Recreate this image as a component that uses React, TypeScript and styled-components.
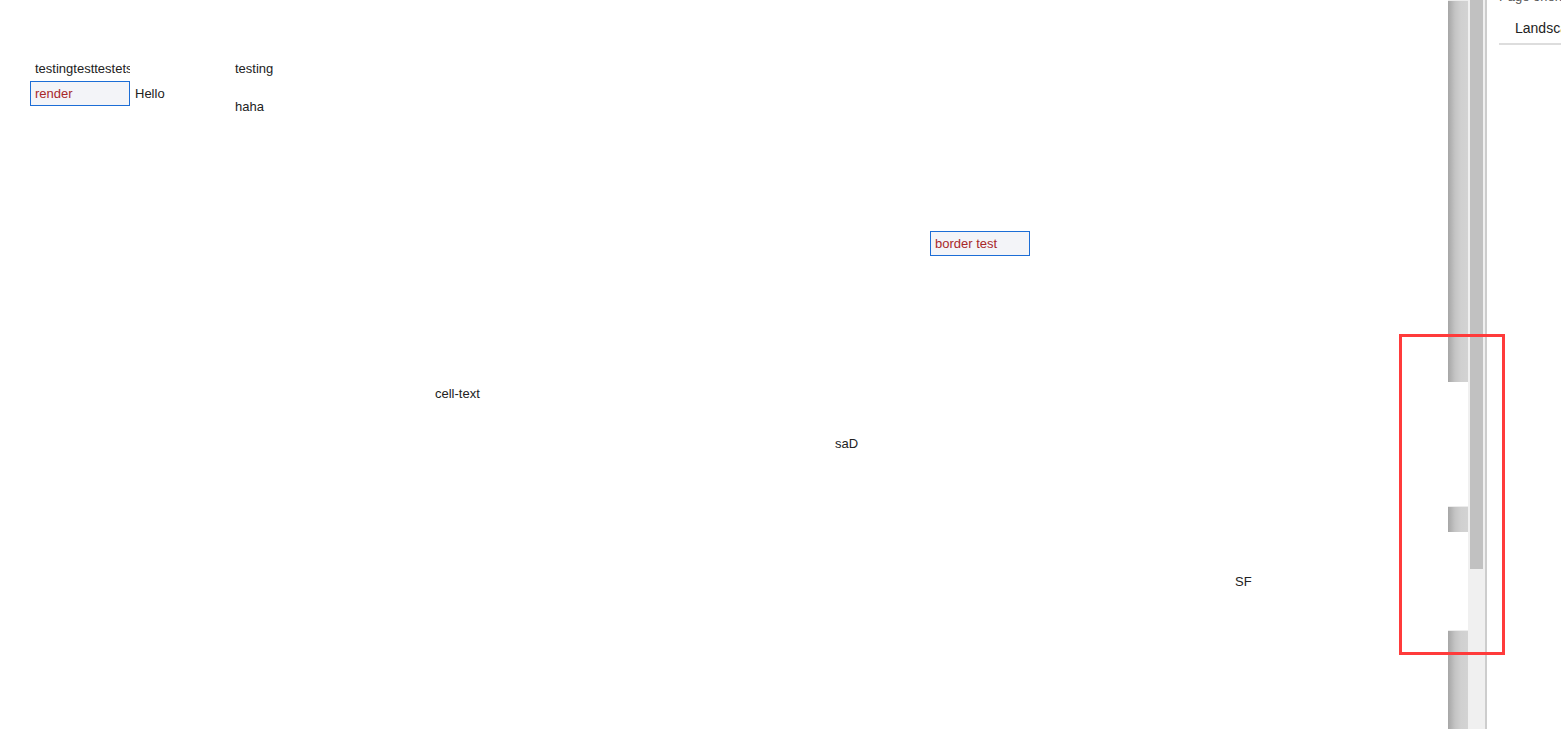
import { FunctionComponent as FC } from 'react';
import styled, { createGlobalStyle } from 'styled-components';

interface ICell {
  col: number;
  row: number;
  span?: number;
  text: string;
  boxed?: boolean;
}

const cells: ICell[] = [
  { col: 1, row: 1, text: 'testingtesttestetstesting' },
  { col: 1, row: 2, text: 'render', boxed: true },
  { col: 2, row: 2, text: 'Hello' },
  { col: 3, row: 1, text: 'testing' },
  { col: 3, row: 2, span: 2, text: 'haha' },
  { col: 10, row: 8, text: 'border test', boxed: true },
  { col: 5, row: 14, text: 'cell-text' },
  { col: 9, row: 16, text: 'saD' },
  { col: 13, row: 21, span: 2, text: 'SF' },
];

// gray header blocks in the frozen strip: [top, height]
const stripBlocks: [number, number][] = [
  [0, 382],
  [506, 26],
  [630, 99],
];

const GlobalStyle = createGlobalStyle`
  html, body {
    margin: 0;
    padding: 0;
    height: 100%;
    overflow: hidden;
    background: #ffffff;
    font-family: 'Liberation Sans', Arial, sans-serif;
    font-size: 13px;
    color: #222222;
  }
`;

const Page = styled.div`
  position: relative;
  display: flex;
  width: 1561px;
  height: 729px;
  overflow: hidden;
`;

const Sheet = styled.div`
  flex: 0 0 1448px;
  height: 100%;
  padding: 56px 0 0 30px;
  box-sizing: border-box;
  overflow: hidden;
`;

const Grid = styled.div`
  display: grid;
  grid-template-columns: repeat(14, 100px);
  grid-auto-rows: 25px;
`;

const Cell = styled.div<{ $col: number; $row: number; $span: number; $boxed?: boolean }>`
  grid-column: ${p => p.$col};
  grid-row: ${p => p.$row} / span ${p => p.$span};
  display: flex;
  align-items: center;
  box-sizing: border-box;
  overflow: hidden;
  white-space: nowrap;
  color: ${p => (p.$boxed ? '#a8282a' : '#222222')};
  background: ${p => (p.$boxed ? '#f3f4f8' : 'transparent')};
  border: ${p => (p.$boxed ? '1px solid #1c6dd6' : 'none')};
  padding: 0 5px 0 ${p => (p.$boxed ? '4px' : '5px')};
`;

const Strip = styled.div`
  position: relative;
  flex: 0 0 20px;
  height: 100%;
  background: #ffffff;
`;

const StripBlock = styled.div`
  position: absolute;
  left: 0;
  width: 20px;
  box-sizing: border-box;
  border-top: 1px solid #ececec;
  background: linear-gradient(to right, #a6a6a6 0%, #c4c4c4 35%, #d0d0d0 65%, #d3d3d3 100%);
`;

const Track = styled.div`
  flex: 0 0 17px;
  height: 100%;
  background: #f0f0f0;
  padding: 0 2px;
  box-sizing: border-box;
`;

const Thumb = styled.div`
  width: 13px;
  height: 569px;
  background: #c1c1c1;
`;

const Divider = styled.div`
  flex: 0 0 2px;
  height: 100%;
  background: #cdcdcd;
`;

const Panel = styled.div`
  flex: 1;
  height: 100%;
  padding: 0 0 0 12px;
  overflow: hidden;
  white-space: nowrap;
`;

const PanelLabel = styled.div`
  margin-top: -11px;
  height: 16px;
  line-height: 16px;
  color: #555555;
`;

const PanelSelect = styled.div`
  height: 30px;
  line-height: 30px;
  padding-left: 16px;
  margin-top: 8px;
  border-bottom: 2px solid #dddddd;
  font-size: 14px;
  color: #222222;
`;

const Annotation = styled.div`
  position: absolute;
  left: 1399px;
  top: 334px;
  width: 106px;
  height: 321px;
  box-sizing: border-box;
  border: 3px solid #ff3b3b;
  pointer-events: none;
`;

const App: FC = () => (
  <>
    <GlobalStyle />
    <Page>
      <Sheet>
        <Grid>
          {cells.map(c => (
            <Cell key={`${c.col}-${c.row}`} $col={c.col} $row={c.row} $span={c.span || 1} $boxed={c.boxed}>
              {c.text}
            </Cell>
          ))}
        </Grid>
      </Sheet>
      <Strip>
        {stripBlocks.map(([top, height]) => (
          <StripBlock key={top} style={{ top, height }} />
        ))}
      </Strip>
      <Track>
        <Thumb />
      </Track>
      <Divider />
      <Panel>
        <PanelLabel>Page orientation</PanelLabel>
        <PanelSelect>Landscape</PanelSelect>
      </Panel>
      <Annotation />
    </Page>
  </>
);

export default App;
